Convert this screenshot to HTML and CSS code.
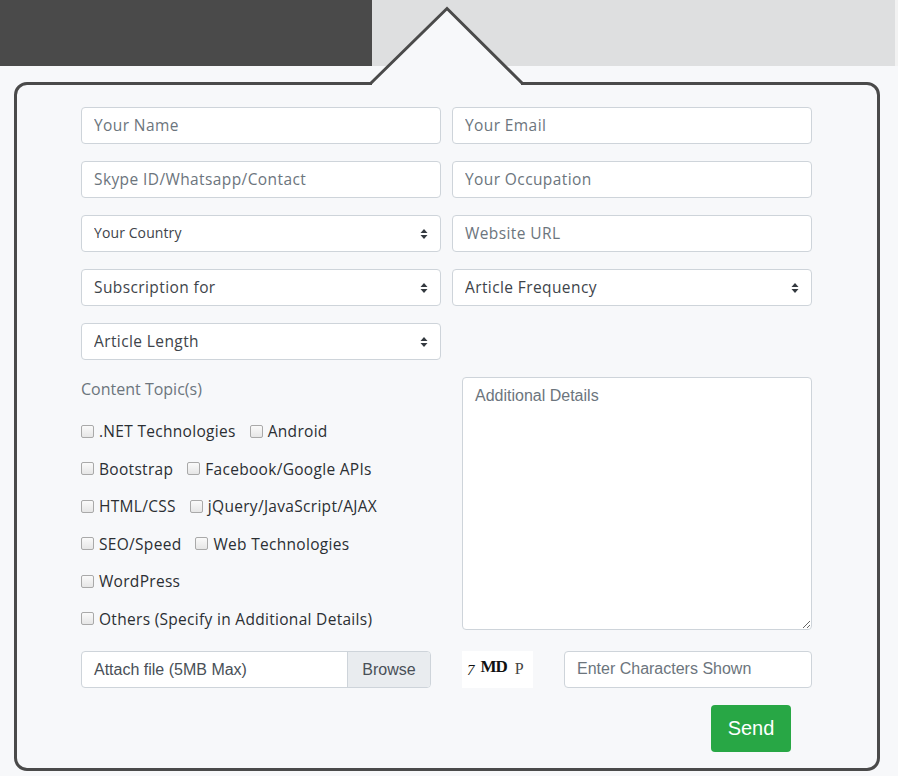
FILE: index.html
```html
<!DOCTYPE html>
<html lang="en">
<head>
  <meta charset="UTF-8">
  <meta name="viewport" content="width=device-width, initial-scale=1">
  <title>Subscribe</title>
  <link rel="stylesheet" href="styles.css">
</head>
<body>

  <div class="page">
    <div class="top-bar">
      <div class="top-dark"></div>
      <div class="top-light"></div>
    </div>

    <svg class="pointer" width="162" height="90" viewBox="0 0 162 90">
      <polygon points="6,83.5 81,8 155,83.5 155,90 6,90" fill="#f7f8fa"/>
      <polyline points="4,84 81,8.5 157,84" fill="none" stroke="#4a4a4a" stroke-width="3" stroke-linejoin="miter"/>
    </svg>

    <div class="form-box">
      <form class="subscribe-form">
        <div class="field-grid">
          <input type="text" class="form-control" placeholder="Your Name">
          <input type="text" class="form-control" placeholder="Your Email">
          <input type="text" class="form-control" placeholder="Skype ID/Whatsapp/Contact">
          <input type="text" class="form-control" placeholder="Your Occupation">
          <select class="form-select country">
            <option>Your Country</option>
          </select>
          <input type="text" class="form-control" placeholder="Website URL">
          <select class="form-select">
            <option>Subscription for</option>
          </select>
          <select class="form-select">
            <option>Article Frequency</option>
          </select>
          <select class="form-select">
            <option>Article Length</option>
          </select>
        </div>

        <div class="lower-grid">
          <div class="topics">
            <div class="topics-title">Content Topic(s)</div>
            <div class="check-row">
              <label class="check"><input type="checkbox"> .NET Technologies</label>
              <label class="check"><input type="checkbox"> Android</label>
            </div>
            <div class="check-row">
              <label class="check"><input type="checkbox"> Bootstrap</label>
              <label class="check"><input type="checkbox"> Facebook/Google APIs</label>
            </div>
            <div class="check-row">
              <label class="check"><input type="checkbox"> HTML/CSS</label>
              <label class="check"><input type="checkbox"> jQuery/JavaScript/AJAX</label>
            </div>
            <div class="check-row">
              <label class="check"><input type="checkbox"> SEO/Speed</label>
              <label class="check"><input type="checkbox"> Web Technologies</label>
            </div>
            <div class="check-row">
              <label class="check"><input type="checkbox"> WordPress</label>
            </div>
            <div class="check-row">
              <label class="check"><input type="checkbox"> Others (Specify in Additional Details)</label>
            </div>
          </div>

          <textarea class="details" placeholder="Additional Details"></textarea>

          <div class="file-input">
            <span class="file-label">Attach file (5MB Max)</span>
            <span class="file-browse">Browse</span>
          </div>

          <div class="captcha-row">
            <div class="captcha"><span class="c1">7</span><span class="c2">MD</span><span class="c3">P</span></div>
            <input type="text" class="form-control captcha-input" placeholder="Enter Characters Shown">
          </div>
        </div>

        <div class="send-row">
          <button type="button" class="send-btn">Send</button>
        </div>
      </form>
    </div>
  </div>

</body>
</html>
```

FILE: styles.css
```css
body {
  margin: 0;
  padding: 0;
  background: #f7f8fa;
  font-family: 'Open Sans', sans-serif;
  color: #212529;
}

.page {
  position: relative;
  width: 898px;
  height: 776px;
  overflow: hidden;
}

.top-bar {
  display: flex;
  height: 66px;
}

.top-dark {
  width: 372px;
  background: #4a4a4a;
}

.top-light {
  flex: 1;
  background: #dedfe0;
  border-right: 3px solid #f2f2f2;
}

.pointer {
  position: absolute;
  left: 366px;
  top: 0;
}

.form-box {
  margin: 16px 18px 0 14px;
  height: 689px;
  border: 3px solid #4a4a4a;
  border-radius: 13px;
  background: #f7f8fa;
  box-sizing: border-box;
  padding: 22px 66px 0 64px;
}

.field-grid {
  display: grid;
  grid-template-columns: 360px 360px;
  column-gap: 11px;
  row-gap: 17px;
}

.form-control,
.form-select {
  height: 37px;
  box-sizing: border-box;
  border: 1px solid #ced4da;
  border-radius: 4px;
  background-color: #fff;
  padding: 0 12px 2px;
  font-family: 'Open Sans', sans-serif;
  font-size: 15.5px;
  letter-spacing: 0.4px;
  color: #495057;
  outline: none;
}

.form-control::placeholder {
  color: #6c757d;
}

.form-select {
  -webkit-appearance: none;
  appearance: none;
  background-image: url("data:image/svg+xml,%3Csvg xmlns='http://www.w3.org/2000/svg' width='8' height='12' viewBox='0 0 8 12'%3E%3Cpath d='M4 1L7.5 5H0.5z M4 11L0.5 7H7.5z' fill='%23343a40'/%3E%3C/svg%3E");
  background-repeat: no-repeat;
  background-position: right 12px center;
  background-size: 8px 12px;
  color: #3e444a;
}

.form-select.country {
  font-size: 14px;
  letter-spacing: 0.1px;
}

.lower-grid {
  display: grid;
  grid-template-columns: 360px 350px;
  column-gap: 21px;
  row-gap: 20px;
  margin-top: 17px;
}

.topics-title {
  font-size: 16px;
  line-height: 24px;
  color: #6c757d;
  margin-bottom: 18px;
}

.check-row {
  display: flex;
  gap: 14px;
  line-height: 24px;
  height: 24px;
  margin-bottom: 13.5px;
}

.check-row:last-child {
  margin-bottom: 0;
}

.check {
  display: flex;
  align-items: center;
  gap: 5px;
  font-size: 15.5px;
  letter-spacing: 0.3px;
  color: #2b2f33;
  white-space: nowrap;
}

.check input {
  -webkit-appearance: none;
  appearance: none;
  width: 13px;
  height: 13px;
  margin: 0;
  border: 1px solid #a9a9a9;
  border-radius: 2px;
  background: linear-gradient(#fafafa, #e6e6e6);
}

.details {
  height: 253px;
  box-sizing: border-box;
  border: 1px solid #ced4da;
  border-radius: 4px;
  background: #fff;
  padding: 8px 12px;
  font-family: 'Liberation Sans', Arial, sans-serif;
  font-size: 16px;
  line-height: 20px;
  resize: vertical;
}

.details::placeholder {
  color: #6c757d;
}

.file-input {
  display: flex;
  width: 350px;
  height: 37px;
  box-sizing: border-box;
  border: 1px solid #ced4da;
  border-radius: 4px;
  background: #fff;
  overflow: hidden;
  font-family: 'Liberation Sans', Arial, sans-serif;
  font-size: 16px;
  color: #495057;
}

.file-label {
  flex: 1;
  padding: 0 12px;
  line-height: 35px;
}

.file-browse {
  width: 83px;
  box-sizing: border-box;
  text-align: center;
  line-height: 35px;
  background: #e9ecef;
  border-left: 1px solid #ced4da;
}

.captcha-row {
  display: flex;
  gap: 31px;
}

.captcha {
  width: 71px;
  height: 37px;
  background: #fff;
  font-family: 'Liberation Serif', serif;
  display: flex;
  align-items: center;
  padding-left: 5px;
  box-sizing: border-box;
  color: #111;
}

.captcha .c1 {
  font-size: 15px;
  font-style: italic;
  margin-top: 3px;
  margin-right: 6px;
}

.captcha .c2 {
  font-size: 17px;
  font-weight: bold;
  letter-spacing: -1px;
  margin-top: -4px;
  margin-right: 8px;
}

.captcha .c3 {
  font-size: 16px;
  color: #444;
}

.captcha-input {
  flex: 1;
  padding-bottom: 0;
  font-family: 'Liberation Sans', Arial, sans-serif;
  font-size: 16px;
  letter-spacing: 0;
}

.send-row {
  display: flex;
  justify-content: flex-end;
  padding-right: 20px;
  margin-top: 17px;
}

.send-btn {
  width: 80px;
  height: 47px;
  border: none;
  border-radius: 4px;
  background: #28a745;
  color: #fff;
  font-family: 'Liberation Sans', Arial, sans-serif;
  font-size: 20px;
  cursor: pointer;
}
```
